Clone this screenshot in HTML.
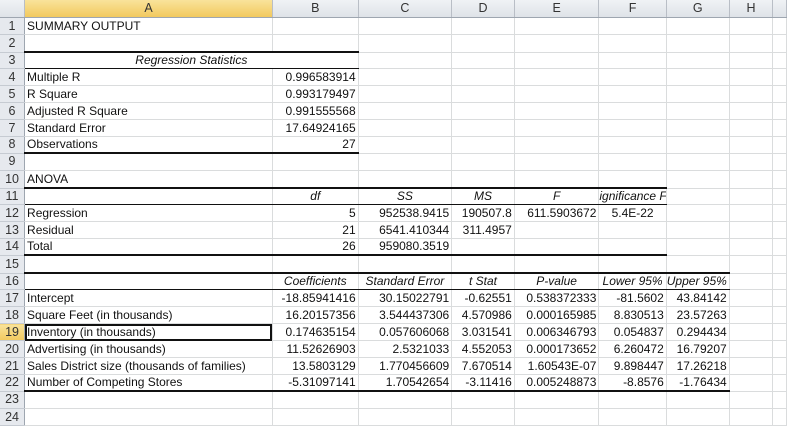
<!DOCTYPE html>
<html><head><meta charset="utf-8"><style>
body{margin:0;width:787px;height:415px;overflow:hidden;background:#fff;font-family:"Liberation Sans",Arial,sans-serif;font-size:12px;color:#111}
table{border-collapse:collapse;table-layout:fixed;position:absolute;left:0;top:0}
td{height:16px;padding:0 2px;border-right:1px solid #dadcdd;border-bottom:1px solid #dadcdd;white-space:nowrap;overflow:hidden;line-height:15px}
tr.k td{height:15px}
tr.h td{height:17px;background:linear-gradient(#f0f2f5,#dfe3e8);border-right:1px solid #b9bec6;border-bottom:1px solid #9ea6b0;text-align:center;color:#333;font-size:12.5px}
td.n{background:#e6e9ee;color:#333;text-align:center;border-right:1px solid #9ea6b0;border-bottom:1px solid #c6cbd2;padding:0;font-size:12.5px}
td.ya{background:linear-gradient(#f9e39b,#f2c95e)!important}
.r{text-align:right}.c{text-align:center}.i{font-style:italic}
.tt{border-top:2px solid #111}.tb{border-bottom:1px solid #111}.bb{border-bottom:2px solid #111}
.sel{outline:2px solid #111;outline-offset:-2px}
</style></head><body>
<table>
<colgroup><col style="width:25px"><col style="width:249px"><col style="width:86px"><col style="width:94px"><col style="width:63px"><col style="width:85px"><col style="width:63px"><col style="width:63px"><col style="width:45px"><col style="width:14px"></colgroup>
<tr class="h"><td></td><td class="ya">A</td><td>B</td><td>C</td><td>D</td><td>E</td><td>F</td><td>G</td><td>H</td><td></td></tr>
<tr><td class="n">1</td><td>SUMMARY OUTPUT</td><td></td><td></td><td></td><td></td><td></td><td></td><td></td><td></td></tr>
<tr><td class="n">2</td><td></td><td></td><td></td><td></td><td></td><td></td><td></td><td></td><td></td></tr>
<tr class="k"><td class="n">3</td><td class="tt tb c i" colspan="2">Regression Statistics</td><td></td><td></td><td></td><td></td><td></td><td></td><td></td></tr>
<tr><td class="n">4</td><td>Multiple R</td><td class="r">0.996583914</td><td></td><td></td><td></td><td></td><td></td><td></td><td></td></tr>
<tr><td class="n">5</td><td>R Square</td><td class="r">0.993179497</td><td></td><td></td><td></td><td></td><td></td><td></td><td></td></tr>
<tr><td class="n">6</td><td>Adjusted R Square</td><td class="r">0.991555568</td><td></td><td></td><td></td><td></td><td></td><td></td><td></td></tr>
<tr><td class="n">7</td><td>Standard Error</td><td class="r">17.64924165</td><td></td><td></td><td></td><td></td><td></td><td></td><td></td></tr>
<tr class="k"><td class="n">8</td><td class="bb">Observations</td><td class="r bb">27</td><td></td><td></td><td></td><td></td><td></td><td></td><td></td></tr>
<tr><td class="n">9</td><td></td><td></td><td></td><td></td><td></td><td></td><td></td><td></td><td></td></tr>
<tr><td class="n">10</td><td>ANOVA</td><td></td><td></td><td></td><td></td><td></td><td></td><td></td><td></td></tr>
<tr class="k"><td class="n">11</td><td class="tt tb"></td><td class="tt tb c i">df</td><td class="tt tb c i">SS</td><td class="tt tb c i">MS</td><td class="tt tb c i">F</td><td class="tt tb i" style="padding:0"><div style="float:right;margin-right:-1px">ignificance F</div></td><td></td><td></td><td></td></tr>
<tr><td class="n">12</td><td>Regression</td><td class="r">5</td><td class="r">952538.9415</td><td class="r">190507.8</td><td class="r">611.5903672</td><td class="c">5.4E-22</td><td></td><td></td><td></td></tr>
<tr><td class="n">13</td><td>Residual</td><td class="r">21</td><td class="r">6541.410344</td><td class="r">311.4957</td><td></td><td></td><td></td><td></td><td></td></tr>
<tr class="k"><td class="n">14</td><td class="bb">Total</td><td class="r bb">26</td><td class="r bb">959080.3519</td><td class="bb"></td><td class="bb"></td><td class="bb"></td><td></td><td></td><td></td></tr>
<tr><td class="n">15</td><td></td><td></td><td></td><td></td><td></td><td></td><td></td><td></td><td></td></tr>
<tr class="k"><td class="n">16</td><td class="tt tb"></td><td class="tt tb c i">Coefficients</td><td class="tt tb c i">Standard Error</td><td class="tt tb c i">t Stat</td><td class="tt tb c i">P-value</td><td class="tt tb c i" style="padding:0">Lower 95%</td><td class="tt tb i" style="padding:0">Upper 95%</td><td></td><td></td></tr>
<tr><td class="n">17</td><td>Intercept</td><td class="r">-18.85941416</td><td class="r">30.15022791</td><td class="r">-0.62551</td><td class="r">0.538372333</td><td class="r">-81.5602</td><td class="r">43.84142</td><td></td><td></td></tr>
<tr><td class="n">18</td><td>Square Feet (in thousands)</td><td class="r">16.20157356</td><td class="r">3.544437306</td><td class="r">4.570986</td><td class="r">0.000165985</td><td class="r">8.830513</td><td class="r">23.57263</td><td></td><td></td></tr>
<tr><td class="n ya">19</td><td class="sel">Inventory (in thousands)</td><td class="r">0.174635154</td><td class="r">0.057606068</td><td class="r">3.031541</td><td class="r">0.006346793</td><td class="r">0.054837</td><td class="r">0.294434</td><td></td><td></td></tr>
<tr><td class="n">20</td><td>Advertising (in thousands)</td><td class="r">11.52626903</td><td class="r">2.5321033</td><td class="r">4.552053</td><td class="r">0.000173652</td><td class="r">6.260472</td><td class="r">16.79207</td><td></td><td></td></tr>
<tr><td class="n">21</td><td>Sales District size (thousands of families)</td><td class="r">13.5803129</td><td class="r">1.770456609</td><td class="r">7.670514</td><td class="r">1.60543E-07</td><td class="r">9.898447</td><td class="r">17.26218</td><td></td><td></td></tr>
<tr class="k"><td class="n">22</td><td class="bb">Number of Competing Stores</td><td class="r bb">-5.31097141</td><td class="r bb">1.70542654</td><td class="r bb">-3.11416</td><td class="r bb">0.005248873</td><td class="r bb">-8.8576</td><td class="r bb">-1.76434</td><td></td><td></td></tr>
<tr><td class="n">23</td><td></td><td></td><td></td><td></td><td></td><td></td><td></td><td></td><td></td></tr>
<tr><td class="n">24</td><td></td><td></td><td></td><td></td><td></td><td></td><td></td><td></td><td></td></tr>
</table>
</body></html>
